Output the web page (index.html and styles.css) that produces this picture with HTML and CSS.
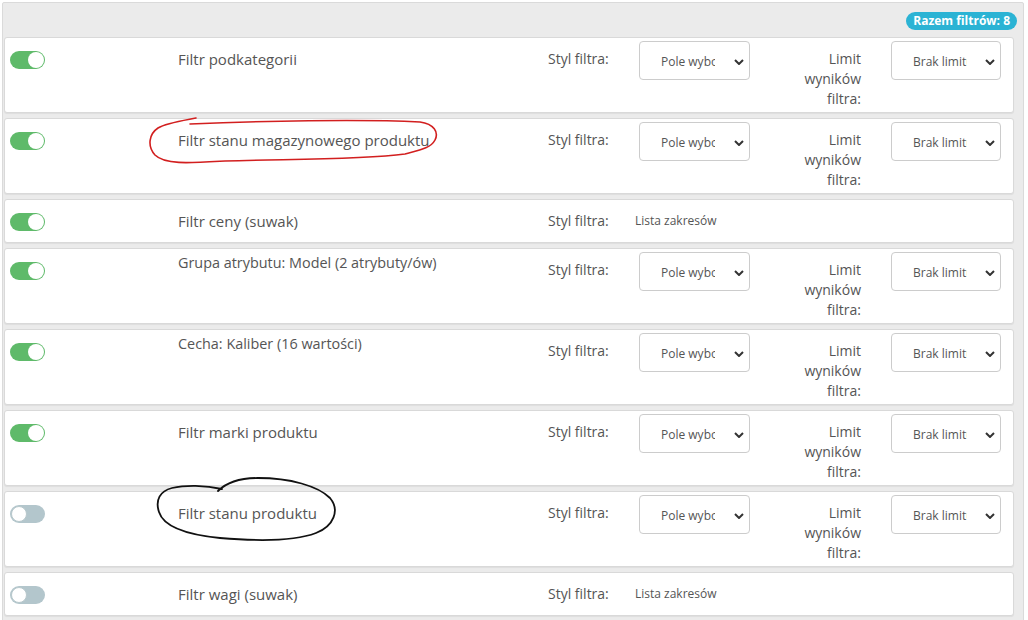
FILE: index.html
```html
<!DOCTYPE html>
<html lang="pl">
<head>
<meta charset="utf-8">
<title>Filtry</title>
<link rel="stylesheet" href="styles.css">
</head>
<body>
<div class="panel">
  <div class="panel-head"><span class="badge">Razem filtrów: 8</span></div>

  <div class="card">
    <div class="c-toggle"><span class="toggle on"></span></div>
    <div class="c-title">Filtr podkategorii</div>
    <div class="c-label">Styl filtra:</div>
    <div class="c-select"><div class="select"><span class="sel-text">Pole wyboru</span><svg class="chev" viewBox="0 0 10 6"><path d="M1 1 L5 5 L9 1"/></svg></div></div>
    <div class="c-limit">Limit wyników filtra:</div>
    <div class="c-select2"><div class="select"><span class="sel-text">Brak limitu</span><svg class="chev" viewBox="0 0 10 6"><path d="M1 1 L5 5 L9 1"/></svg></div></div>
  </div>

  <div class="card">
    <div class="c-toggle"><span class="toggle on"></span></div>
    <div class="c-title">Filtr stanu magazynowego produktu</div>
    <div class="c-label">Styl filtra:</div>
    <div class="c-select"><div class="select"><span class="sel-text">Pole wyboru</span><svg class="chev" viewBox="0 0 10 6"><path d="M1 1 L5 5 L9 1"/></svg></div></div>
    <div class="c-limit">Limit wyników filtra:</div>
    <div class="c-select2"><div class="select"><span class="sel-text">Brak limitu</span><svg class="chev" viewBox="0 0 10 6"><path d="M1 1 L5 5 L9 1"/></svg></div></div>
  </div>

  <div class="card short">
    <div class="c-toggle"><span class="toggle on"></span></div>
    <div class="c-title">Filtr ceny (suwak)</div>
    <div class="c-label narrow">Styl filtra:</div>
    <div class="c-static">Lista zakresów</div>
  </div>

  <div class="card">
    <div class="c-toggle"><span class="toggle on"></span></div>
    <div class="c-title high">Grupa atrybutu: Model (2 atrybuty/ów)</div>
    <div class="c-label">Styl filtra:</div>
    <div class="c-select"><div class="select"><span class="sel-text">Pole wyboru</span><svg class="chev" viewBox="0 0 10 6"><path d="M1 1 L5 5 L9 1"/></svg></div></div>
    <div class="c-limit">Limit wyników filtra:</div>
    <div class="c-select2"><div class="select"><span class="sel-text">Brak limitu</span><svg class="chev" viewBox="0 0 10 6"><path d="M1 1 L5 5 L9 1"/></svg></div></div>
  </div>

  <div class="card">
    <div class="c-toggle"><span class="toggle on"></span></div>
    <div class="c-title high">Cecha: Kaliber (16 wartości)</div>
    <div class="c-label">Styl filtra:</div>
    <div class="c-select"><div class="select"><span class="sel-text">Pole wyboru</span><svg class="chev" viewBox="0 0 10 6"><path d="M1 1 L5 5 L9 1"/></svg></div></div>
    <div class="c-limit">Limit wyników filtra:</div>
    <div class="c-select2"><div class="select"><span class="sel-text">Brak limitu</span><svg class="chev" viewBox="0 0 10 6"><path d="M1 1 L5 5 L9 1"/></svg></div></div>
  </div>

  <div class="card">
    <div class="c-toggle"><span class="toggle on"></span></div>
    <div class="c-title">Filtr marki produktu</div>
    <div class="c-label">Styl filtra:</div>
    <div class="c-select"><div class="select"><span class="sel-text">Pole wyboru</span><svg class="chev" viewBox="0 0 10 6"><path d="M1 1 L5 5 L9 1"/></svg></div></div>
    <div class="c-limit">Limit wyników filtra:</div>
    <div class="c-select2"><div class="select"><span class="sel-text">Brak limitu</span><svg class="chev" viewBox="0 0 10 6"><path d="M1 1 L5 5 L9 1"/></svg></div></div>
  </div>

  <div class="card">
    <div class="c-toggle"><span class="toggle off"></span></div>
    <div class="c-title">Filtr stanu produktu</div>
    <div class="c-label">Styl filtra:</div>
    <div class="c-select"><div class="select"><span class="sel-text">Pole wyboru</span><svg class="chev" viewBox="0 0 10 6"><path d="M1 1 L5 5 L9 1"/></svg></div></div>
    <div class="c-limit">Limit wyników filtra:</div>
    <div class="c-select2"><div class="select"><span class="sel-text">Brak limitu</span><svg class="chev" viewBox="0 0 10 6"><path d="M1 1 L5 5 L9 1"/></svg></div></div>
  </div>

  <div class="card short">
    <div class="c-toggle"><span class="toggle off"></span></div>
    <div class="c-title">Filtr wagi (suwak)</div>
    <div class="c-label narrow">Styl filtra:</div>
    <div class="c-static">Lista zakresów</div>
  </div>
</div>

<svg class="marks" viewBox="0 0 1028 620" width="1028" height="620">
  <path class="red" d="M 190 124 C 260 121, 360 119, 420 122 C 434 124, 439 132, 435 140 C 431 148, 420 150, 405 154 C 360 160, 290 159, 225 161 C 190 163, 165 165, 155 155 C 147 146, 149 134, 158 128 C 166 123, 180 121, 196 118"/>
  <path class="blk" d="M 218 491 C 226 483, 240 478, 258 478 C 290 478, 318 486, 330 498 C 340 510, 334 526, 316 533 C 295 541, 255 541, 220 538 C 190 535, 164 528, 159 512 C 155 500, 160 491, 172 488 C 185 485, 205 485, 222 489"/>
</svg>
</body>
</html>
```

FILE: styles.css
```css
html, body {
  margin: 0;
  padding: 0;
  background: #ffffff;
}

body {
  font-family: "Open Sans", "Liberation Sans", sans-serif;
  color: #555555;
  position: relative;
  width: 1028px;
  height: 620px;
  overflow: hidden;
}

.panel {
  margin: 2px 0 0 2px;
  min-height: 640px;
  background: #ebebeb;
  border: 1px solid #dadada;
  border-radius: 2px;
  padding: 0 9px 0 1px;
  box-sizing: border-box;
  width: 1022px;
}

.panel-head {
  height: 34px;
  display: flex;
  align-items: center;
  justify-content: flex-end;
  margin-right: -3px;
}

.badge {
  display: inline-block;
  height: 18px;
  line-height: 18px;
  padding: 0 7px;
  border-radius: 9px;
  background: #2bb3d4;
  color: #ffffff;
  font-size: 12px;
  font-weight: 700;
  margin-top: 1px;
}

.card {
  display: flex;
  align-items: flex-start;
  background: #ffffff;
  border: 1px solid #d9d9d9;
  border-radius: 3px;
  box-shadow: 0 1px 1px rgba(0, 0, 0, 0.06);
  padding: 3px 5px 2px 5px;
  margin-bottom: 5px;
  min-height: 69px;
  box-sizing: content-box;
}

.card.short {
  min-height: 37px;
}

.c-toggle {
  width: 168px;
  flex: none;
  padding-top: 10px;
}

.toggle {
  display: block;
  width: 35px;
  height: 18px;
  border-radius: 9px;
  position: relative;
}

.toggle::after {
  content: "";
  position: absolute;
  top: 1px;
  width: 16px;
  height: 16px;
  border-radius: 50%;
  background: #ffffff;
  box-sizing: border-box;
}

.toggle.on {
  background: #5fba6a;
}

.toggle.on::after {
  right: 1px;
}

.toggle.off {
  background: #b3c6cc;
}

.toggle.off::after {
  left: 1px;
  border: 1px solid #b8c8cc;
}

.c-title {
  width: 370px;
  flex: none;
  font-size: 15px;
  line-height: 20px;
  padding-top: 8px;
}

.c-title.high {
  font-size: 14.4px;
  padding-top: 1px;
}

.c-label {
  width: 91px;
  flex: none;
  font-size: 14px;
  line-height: 20px;
  padding-top: 8px;
}

.c-label.narrow {
  width: 87px;
}

.c-static {
  font-size: 12px;
  line-height: 20px;
  padding-top: 8px;
}

.c-select {
  width: 111px;
  flex: none;
}

.c-select2 {
  width: 110px;
  flex: none;
  margin-left: 30px;
}

.select {
  height: 39px;
  border: 1px solid #cccccc;
  border-radius: 4px;
  box-sizing: border-box;
  display: flex;
  align-items: center;
  padding-left: 21px;
  padding-top: 2px;
  position: relative;
}

.sel-text {
  display: block;
  width: 54px;
  overflow: hidden;
  white-space: nowrap;
  font-size: 12px;
  color: #555555;
  line-height: 16px;
}

.chev {
  position: absolute;
  right: 5px;
  top: 17px;
  width: 10px;
  height: 6px;
}

.chev path {
  fill: none;
  stroke: #333333;
  stroke-width: 2;
}

.c-limit {
  width: 62px;
  flex: none;
  margin-left: 49px;
  margin-bottom: 1px;
  text-align: right;
  font-size: 14px;
  line-height: 20px;
  padding-top: 8px;
}

.marks {
  position: absolute;
  top: 0;
  left: 0;
  pointer-events: none;
}

.marks path {
  fill: none;
  stroke-width: 1.6;
  stroke-linecap: round;
  stroke-linejoin: round;
}

.marks .red {
  stroke: #d21f1f;
}

.marks .blk {
  stroke: #111111;
  stroke-width: 1.8;
}
```
